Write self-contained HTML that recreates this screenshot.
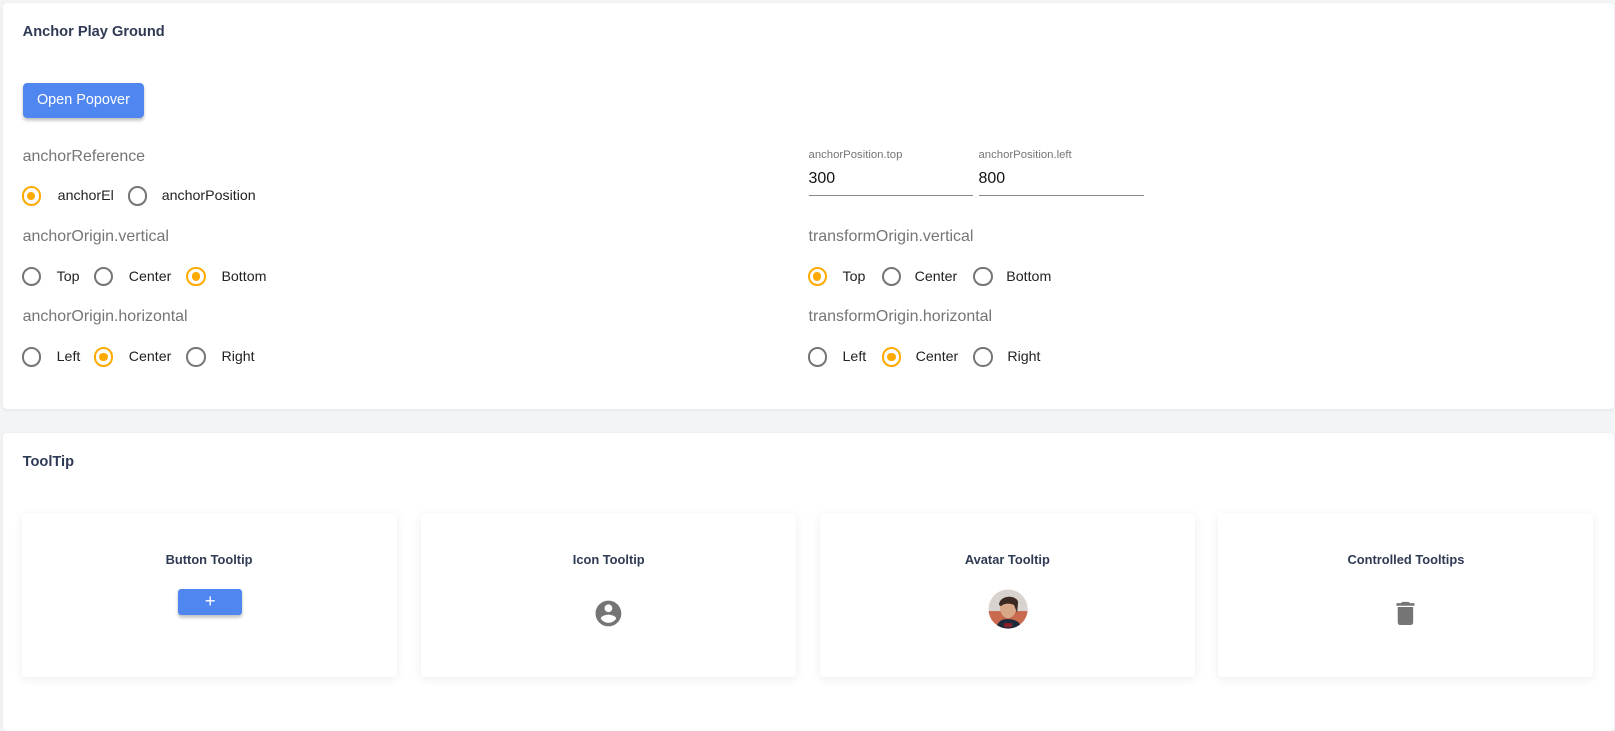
<!DOCTYPE html>
<html><head><style>
html,body{margin:0;padding:0;background:#f3f4f6;}
body{width:1568px;height:700px;zoom:1.03;overflow:hidden;position:relative;font-family:"Liberation Sans",sans-serif;}
.card{position:absolute;background:#fff;border-radius:4px;box-shadow:0 1px 4px rgba(0,0,0,0.06);}
.abs{position:absolute;white-space:nowrap;}
.h{font-size:14.2px;font-weight:bold;color:#2f3a55;}
.lbl{font-size:15.5px;color:#757575;}
.r{position:absolute;width:19px;height:19px;border:2px solid #757575;border-radius:50%;box-sizing:border-box;margin-left:-1px;margin-top:-1px;}
.r.on{border-color:#ffaa00;}
.r.on::after{content:"";position:absolute;left:3.5px;top:3.5px;width:8px;height:8px;border-radius:50%;background:#ffaa00;}
.rt{position:absolute;font-size:13.8px;color:#222;white-space:nowrap;}
.inner{position:absolute;top:498px;width:364px;height:159px;background:#fff;border-radius:4px;box-shadow:0 2px 10px rgba(0,0,0,0.07);}
.inner .t{position:absolute;top:38px;left:0;right:0;text-align:center;font-size:12.5px;font-weight:bold;color:#2f3a55;}
</style></head><body>
<div class="card" style="left:3px;top:3px;width:1564px;height:394px;"></div>
<div class="card" style="left:3px;top:420px;width:1564px;height:290px;"></div>

<div class="abs h" style="left:22px;top:23px;">Anchor Play Ground</div>
<div class="abs" style="left:22px;top:81px;width:118px;height:34px;background:#5086f0;border-radius:4px;box-shadow:0 2px 3px rgba(0,0,0,0.25);color:#fff;font-size:14px;line-height:34px;text-align:center;">Open Popover</div>

<div class="abs lbl" style="left:22px;top:144px;">anchorReference</div>
<div class="r on" style="left:22px;top:182px;"></div><div class="rt" style="left:56px;top:183px;">anchorEl</div>
<div class="r" style="left:125px;top:182px;"></div><div class="rt" style="left:157px;top:183px;">anchorPosition</div>

<div class="abs lbl" style="left:22px;top:221px;">anchorOrigin.vertical</div>
<div class="r" style="left:22px;top:260px;"></div><div class="rt" style="left:55px;top:261px;">Top</div>
<div class="r" style="left:92px;top:260px;"></div><div class="rt" style="left:125px;top:261px;">Center</div>
<div class="r on" style="left:182px;top:260px;"></div><div class="rt" style="left:215px;top:261px;">Bottom</div>

<div class="abs lbl" style="left:22px;top:299px;">anchorOrigin.horizontal</div>
<div class="r" style="left:22px;top:338px;"></div><div class="rt" style="left:55px;top:339px;">Left</div>
<div class="r on" style="left:92px;top:338px;"></div><div class="rt" style="left:125px;top:339px;">Center</div>
<div class="r" style="left:182px;top:338px;"></div><div class="rt" style="left:215px;top:339px;">Right</div>

<div class="abs" style="left:785px;top:145px;font-size:11px;color:#757575;">anchorPosition.top</div>
<div class="abs" style="left:785px;top:165px;font-size:15.5px;color:#111;">300</div>
<div class="abs" style="left:785px;top:189px;width:160px;height:1px;background:#8a8a8a;"></div>
<div class="abs" style="left:950px;top:145px;font-size:11px;color:#757575;">anchorPosition.left</div>
<div class="abs" style="left:950px;top:165px;font-size:15.5px;color:#111;">800</div>
<div class="abs" style="left:950px;top:189px;width:161px;height:1px;background:#8a8a8a;"></div>

<div class="abs lbl" style="left:785px;top:221px;">transformOrigin.vertical</div>
<div class="r on" style="left:785px;top:260px;"></div><div class="rt" style="left:818px;top:261px;">Top</div>
<div class="r" style="left:857px;top:260px;"></div><div class="rt" style="left:888px;top:261px;">Center</div>
<div class="r" style="left:946px;top:260px;"></div><div class="rt" style="left:977px;top:261px;">Bottom</div>

<div class="abs lbl" style="left:785px;top:299px;">transformOrigin.horizontal</div>
<div class="r" style="left:785px;top:338px;"></div><div class="rt" style="left:818px;top:339px;">Left</div>
<div class="r on" style="left:857px;top:338px;"></div><div class="rt" style="left:889px;top:339px;">Center</div>
<div class="r" style="left:946px;top:338px;"></div><div class="rt" style="left:978px;top:339px;">Right</div>

<div class="abs h" style="left:22px;top:441px;">ToolTip</div>

<div class="inner" style="left:21px;"><div class="t">Button Tooltip</div>
<div style="position:absolute;left:152px;top:74px;width:62px;height:25px;background:#5086f0;border-radius:3px;box-shadow:0 2px 3px rgba(0,0,0,0.25);color:#fff;text-align:center;line-height:24px;font-size:18px;">+</div></div>

<div class="inner" style="left:409px;"><div class="t">Icon Tooltip</div>
<svg style="position:absolute;left:167px;top:83px" width="30" height="30" viewBox="0 0 24 24"><path fill="#757575" d="M12 2C6.48 2 2 6.48 2 12s4.480 10 10 10 10-4.48 10-10S17.52 2 12 2zm0 3c1.66 0 3 1.34 3 3s-1.34 3-3 3-3-1.34-3-3 1.34-3 3-3zm0 14.2c-2.5 0-4.71-1.28-6-3.22.03-1.99 4-3.08 6-3.08 1.99 0 5.970 1.09 6 3.08-1.29 1.94-3.5 3.22-6 3.22z"/></svg></div>

<div class="inner" style="left:796px;"><div class="t">Avatar Tooltip</div>
<svg style="position:absolute;left:163px;top:74px" width="39" height="39" viewBox="0 0 40 40"><defs><clipPath id="c"><circle cx="20" cy="20" r="19.5"/></clipPath></defs><g clip-path="url(#c)"><rect width="40" height="40" fill="#d9d3d0"/><rect y="22" width="40" height="18" fill="#c96a4e"/><path d="M8 40 C10 30 16 30 20 30 C26 30 32 32 34 40Z" fill="#1c2a3a"/><ellipse cx="20" cy="19" rx="8" ry="10" fill="#d8a888"/><path d="M11 16 C11 6 28 5 30 13 L29 24 L26 16 C22 14 16 14 13 17Z" fill="#3a2a22"/><rect x="16" y="34" width="8" height="4" fill="#8a1f2a"/></g></svg></div>

<div class="inner" style="left:1183px;"><div class="t">Controlled Tooltips</div>
<svg style="position:absolute;left:167px;top:83px" width="30" height="30" viewBox="0 0 24 24"><path fill="#757575" d="M6 19c0 1.1.9 2 2 2h8c1.1 0 2-.9 2-2V7H6v12zM19 4h-3.5l-1-1h-5l-1 1H5v2h14V4z"/></svg></div>
</body></html>
